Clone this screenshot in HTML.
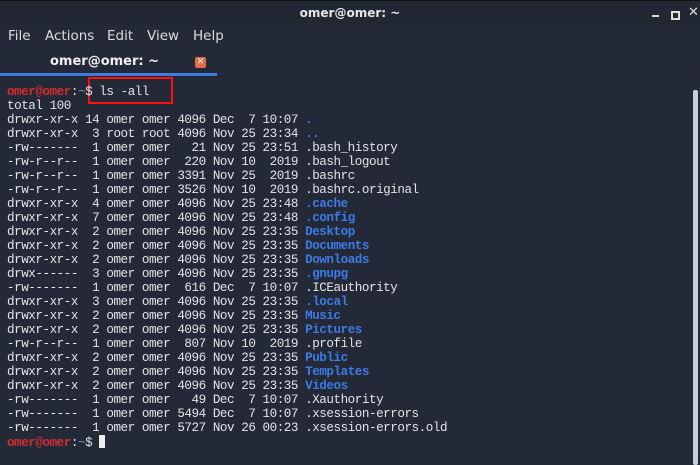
<!DOCTYPE html>
<html><head><style>
body{margin:0;width:700px;height:465px;overflow:hidden;background:#232937;font-family:"DejaVu Sans","Liberation Sans",sans-serif;position:relative}
.top{position:absolute;left:0;top:0;width:700px;height:24px;background:#222734;border-top:1px solid #111}
.title{position:absolute;top:5px;left:0;width:700px;text-align:center;color:#e6e6e6;font-size:12px;font-weight:bold}
.menu span{position:absolute;top:28px;color:#dcdcdc;font-size:13.5px}
.tab{position:absolute;top:54px;left:50px;color:#f0f0f0;font-size:13px;font-weight:bold}
.x{position:absolute;left:195px;top:57px;width:11px;height:11px;background:#e06c4a;border-radius:2px;color:#fff;font-size:9px;line-height:11px;text-align:center;font-weight:bold}
.ul{position:absolute;left:0;top:73px;width:217px;height:3px;background:#3d7de0}
.sep{position:absolute;left:0;top:76px;width:700px;height:1px;background:#1e232e}
pre{position:absolute;left:7px;top:85px;margin:0;font-family:"Liberation Mono",monospace;font-size:12.6px;letter-spacing:-0.46px;line-height:14px;color:#e2e4e8}
.r{color:#d42d2d;font-weight:bold}.c{color:#7aa0e0}.b{color:#3d7be6;font-weight:bold}
.box{position:absolute;left:88px;top:77px;width:85px;height:27px;border:2px solid #ff1010;box-sizing:border-box}
.sb{position:absolute;left:693px;top:90px;width:5px;height:375px;background:#c8cfd8;border-radius:2px}
.cur{display:inline-block;width:6px;height:13px;background:#eee;vertical-align:-2px}
</style></head><body>
<div class="top"><div class="title">omer@omer: ~</div>
<span style="position:absolute;left:652px;top:14px;width:7px;height:2px;background:#ddd"></span>
<span style="position:absolute;left:671px;top:10px;width:5px;height:5px;border:2px solid #ddd"></span>
<span style="position:absolute;left:688px;top:4px;color:#ddd;font-size:13px;font-weight:bold">✕</span></div>
<div class="menu"><span style="left:8px">File</span><span style="left:45px">Actions</span><span style="left:107px">Edit</span><span style="left:147px">View</span><span style="left:193px">Help</span></div>
<div class="tab">omer@omer: ~</div><div class="x">✕</div>
<div class="ul"></div><div class="sep"></div>
<div class="box"></div>
<div class="sb"></div>
<pre><span class="r">omer@omer</span>:<span class="c">~</span>$ ls -all
total 100
drwxr-xr-x 14 omer omer 4096 Dec  7 10:07 <span class="b">.</span>
drwxr-xr-x  3 root root 4096 Nov 25 23:34 <span class="b">..</span>
-rw-------  1 omer omer   21 Nov 25 23:51 .bash_history
-rw-r--r--  1 omer omer  220 Nov 10  2019 .bash_logout
-rw-r--r--  1 omer omer 3391 Nov 25  2019 .bashrc
-rw-r--r--  1 omer omer 3526 Nov 10  2019 .bashrc.original
drwxr-xr-x  4 omer omer 4096 Nov 25 23:48 <span class="b">.cache</span>
drwxr-xr-x  7 omer omer 4096 Nov 25 23:48 <span class="b">.config</span>
drwxr-xr-x  2 omer omer 4096 Nov 25 23:35 <span class="b">Desktop</span>
drwxr-xr-x  2 omer omer 4096 Nov 25 23:35 <span class="b">Documents</span>
drwxr-xr-x  2 omer omer 4096 Nov 25 23:35 <span class="b">Downloads</span>
drwx------  3 omer omer 4096 Nov 25 23:35 <span class="b">.gnupg</span>
-rw-------  1 omer omer  616 Dec  7 10:07 .ICEauthority
drwxr-xr-x  3 omer omer 4096 Nov 25 23:35 <span class="b">.local</span>
drwxr-xr-x  2 omer omer 4096 Nov 25 23:35 <span class="b">Music</span>
drwxr-xr-x  2 omer omer 4096 Nov 25 23:35 <span class="b">Pictures</span>
-rw-r--r--  1 omer omer  807 Nov 10  2019 .profile
drwxr-xr-x  2 omer omer 4096 Nov 25 23:35 <span class="b">Public</span>
drwxr-xr-x  2 omer omer 4096 Nov 25 23:35 <span class="b">Templates</span>
drwxr-xr-x  2 omer omer 4096 Nov 25 23:35 <span class="b">Videos</span>
-rw-------  1 omer omer   49 Dec  7 10:07 .Xauthority
-rw-------  1 omer omer 5494 Dec  7 10:07 .xsession-errors
-rw-------  1 omer omer 5727 Nov 26 00:23 .xsession-errors.old
<span class="r">omer@omer</span>:<span class="c">~</span>$ <span class="cur"></span></pre>
</body></html>
